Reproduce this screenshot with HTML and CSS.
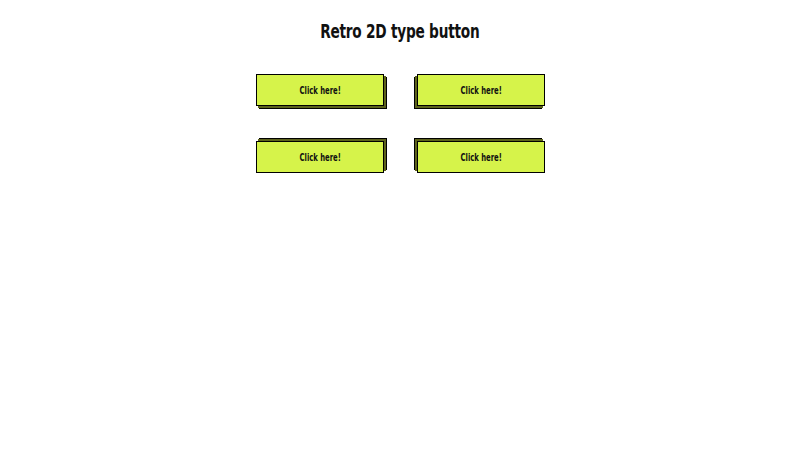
FILE: index.html
```html
<!DOCTYPE html>
<html lang="en">
<head>
    <meta charset="UTF-8">
    <meta name="viewport" content="width=device-width, initial-scale=1.0">
    <title>Retro 2D type button</title>
    <link rel="stylesheet" href="styles.css">
</head>
<body>
    <div class="container">
        <h1><span class="narrow">Retro 2D type button</span></h1>

        <!-- Four buttons, each with its shadow thrown to a different corner -->
        <div class="buttons">
            <button class="retro shadow-br"><span class="narrow">Click here!</span></button>
            <button class="retro shadow-bl"><span class="narrow">Click here!</span></button>
            <button class="retro shadow-tr"><span class="narrow">Click here!</span></button>
            <button class="retro shadow-tl"><span class="narrow">Click here!</span></button>
        </div>
    </div>
</body>
</html>
```

FILE: styles.css
```css
body {
    font-family: 'DejaVu Sans Condensed', 'DejaVu Sans', sans-serif;
    background-color: #fff;
    margin: 0;
    padding: 0;
}

.container {
    display: flex;
    flex-direction: column;
    align-items: center;
}

/* squeeze the condensed face a little further for the retro look */
.narrow {
    display: inline-block;
    transform: scaleX(0.76);
}

h1 {
    font-size: 20px;
    font-weight: bold;
    color: #111;
    margin: 19px 0 31px;
    letter-spacing: -0.3px;
    white-space: nowrap;
}

.buttons {
    display: grid;
    grid-template-columns: repeat(2, 128px);
    column-gap: 33px;
    row-gap: 35px;
    justify-content: center;
    padding-left: 1px;
}

.retro {
    width: 128px;
    height: 32px;
    background-color: #d6f34a;
    border: 1.5px solid #000;
    font-family: inherit;
    font-size: 10px;
    font-weight: bold;
    color: #111;
    cursor: pointer;
    padding: 0;
    white-space: nowrap;
}

.shadow-br {
    box-shadow: 2px 2px 0 #5c621c, 3px 3px 0 #000;
}

.shadow-bl {
    box-shadow: -2px 2px 0 #5c621c, -3px 3px 0 #000;
}

.shadow-tr {
    box-shadow: 2px -2px 0 #5c621c, 3px -3px 0 #000;
}

.shadow-tl {
    box-shadow: -2px -2px 0 #5c621c, -3px -3px 0 #000;
}
```
